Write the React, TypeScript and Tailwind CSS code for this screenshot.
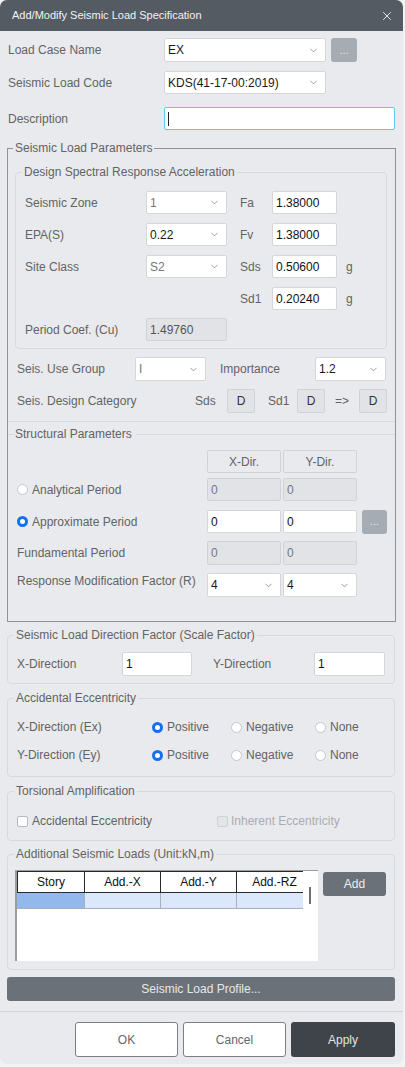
import { ChevronDown, X } from 'lucide-react';
import type { ReactNode } from 'react';

const font = { fontFamily: '"Liberation Sans", Arial, sans-serif' };

function Select({ value, className = '', dim = false }: { value: string; className?: string; dim?: boolean }) {
  return (
    <div
      className={`flex items-center justify-between bg-white border border-[#d4d6da] rounded-[2px] pl-[3px] pr-[6px] ${className}`}
    >
      <span className={dim ? 'text-[#777]' : 'text-[#1a1a1a]'}>{value}</span>
      <ChevronDown className="w-[11px] h-[11px] text-[#777]" strokeWidth={1.6} />
    </div>
  );
}

function Field({ value = '', className = '', disabled = false }: { value?: string; className?: string; disabled?: boolean }) {
  return (
    <div
      className={`flex items-center border rounded-[2px] pl-[3px] ${
        disabled ? 'bg-[#e1e3e7] border-[#d0d2d6] text-[#777]' : 'bg-white border-[#d4d6da] text-[#111]'
      } ${className}`}
    >
      {value}
    </div>
  );
}

function Dots({ className = '' }: { className?: string }) {
  return (
    <div className={`flex items-center justify-center bg-[#a6acb3] rounded-[3px] text-[#e6e8ea] text-[11px] ${className}`}>
      ...
    </div>
  );
}

function Radio({ checked = false }: { checked?: boolean }) {
  return checked ? (
    <span className="inline-block w-[11px] h-[11px] rounded-full border-[3px] border-[#1570ef] bg-white" />
  ) : (
    <span className="inline-block w-[11px] h-[11px] rounded-full border border-[#c4c6ca] bg-white" />
  );
}

function Check({ disabled = false }: { disabled?: boolean }) {
  return (
    <span
      className={`inline-block w-[11px] h-[11px] rounded-[2px] border ${
        disabled ? 'bg-[#e4e5e8] border-[#cdd0d4]' : 'bg-white border-[#b5b8bd]'
      }`}
    />
  );
}

function Group({
  title,
  children,
  className = '',
  border = 'border-[#d7d9dd] rounded-[4px]',
  legendClass = 'ml-[6px] px-[2px]',
}: {
  title: string;
  children: ReactNode;
  className?: string;
  border?: string;
  legendClass?: string;
}) {
  return (
    <fieldset className={`border ${border} ${className}`}>
      <legend className={`leading-[14px] text-[#636363] ${legendClass}`}>{title}</legend>
      {children}
    </fieldset>
  );
}

function DBox() {
  return (
    <div className="w-[28px] h-[24px] flex items-center justify-center bg-[#e1e3e7] border border-[#d0d2d6] rounded-[2px] text-[#333]">
      D
    </div>
  );
}

export default function App() {
  return (
    <div className="w-[405px] h-[1067px] bg-[#f3f3f3] text-[12px]" style={font}>
      <div className="w-[403px] h-[1064px] bg-[#e9eaee] rounded-[7px] flex flex-col overflow-hidden">
        {/* Title bar */}
        <div className="h-[31px] shrink-0 bg-[#555b63] flex items-center justify-between pl-[12px] pr-[9px] text-[#f2f3f4] text-[11px]">
          <span>Add/Modify Seismic Load Specification</span>
          <X className="w-[14px] h-[14px]" strokeWidth={1.6} />
        </div>

        <div className="px-[7px] text-[#636363]">
          {/* Header rows */}
          <div className="mt-[7px] h-[24px] flex items-center">
            <span className="w-[157px] pl-[1px]">Load Case Name</span>
            <Select value="EX" className="w-[162px] h-[24px]" />
            <Dots className="ml-[5px] w-[26px] h-[24px]" />
          </div>
          <div className="mt-[9px] h-[23px] flex items-center">
            <span className="w-[157px] pl-[1px]">Seismic Load Code</span>
            <Select value="KDS(41-17-00:2019)" className="w-[162px] h-[23px]" />
          </div>
          <div className="mt-[13px] h-[23px] flex items-center">
            <span className="w-[157px] pl-[1px]">Description</span>
            <div className="w-[231px] h-[23px] bg-white border border-[#5ec8ee] rounded-[2px] flex items-center pl-[3px]">
              <span className="w-[1px] h-[14px] bg-[#222]" />
            </div>
          </div>

          {/* Seismic Load Parameters */}
          <Group
            title="Seismic Load Parameters"
            className="mt-[11px] w-[388px]"
            border="border-[#8f9297] rounded-none"
            legendClass="ml-[5px] px-[2px]"
          >
            <Group title="Design Spectral Response Acceleration" className="mt-[10px] ml-[7px] w-[372px]">
              <div className="pt-[12px] pb-[7px] pl-[9px] flex flex-col">
                {[
                  ['Seismic Zone', '1', true, 'Fa', '1.38000', false],
                  ['EPA(S)', '0.22', false, 'Fv', '1.38000', false],
                  ['Site Class', 'S2', true, 'Sds', '0.50600', true],
                ].map(([label, sel, dim, k, v, g]) => (
                  <div key={label as string} className="h-[23px] mb-[9px] flex items-center">
                    <span className="w-[121px]">{label}</span>
                    <Select value={sel as string} dim={dim as boolean} className="w-[81px] h-[23px]" />
                    <span className="w-[45px] pl-[13px]">{k}</span>
                    <Field value={v as string} className="w-[65px] h-[23px]" />
                    {g && <span className="ml-[9px]">g</span>}
                  </div>
                ))}
                <div className="h-[23px] mb-[8px] flex items-center">
                  <span className="w-[202px]" />
                  <span className="w-[45px] pl-[13px]">Sd1</span>
                  <Field value="0.20240" className="w-[65px] h-[23px]" />
                  <span className="ml-[9px]">g</span>
                </div>
                <div className="h-[23px] flex items-center">
                  <span className="w-[121px]">Period Coef. (Cu)</span>
                  <Field value="1.49760" disabled className="w-[81px] h-[23px] !text-[#555]" />
                </div>
              </div>
            </Group>

            <div className="pl-[9px] pr-[8px]">
              <div className="mt-[8px] h-[24px] flex items-center">
                <span className="w-[118px]">Seis. Use Group</span>
                <Select value="I" dim className="w-[71px] h-[24px]" />
                <span className="ml-[14px] w-[95px]">Importance</span>
                <Select value="1.2" className="w-[71px] h-[24px]" />
              </div>
              <div className="mt-[8px] h-[24px] flex items-center">
                <span className="w-[178px]">Seis. Design Category</span>
                <span className="w-[32px]">Sds</span>
                <DBox />
                <span className="ml-[13px] w-[29px]">Sd1</span>
                <DBox />
                <span className="ml-[10px] w-[24px]">=&gt;</span>
                <DBox />
              </div>
            </div>
            <div className="mt-[8px] border-b border-[#d7d9dd]" />

            <fieldset className="mt-[5px] border-t border-[#d7d9dd]">
              <legend className="ml-[7px] pr-[4px] leading-[14px] text-[#636363]">Structural Parameters</legend>
              <div className="pl-[9px] pb-[24px]">
                <div className="mt-[9px] h-[23px] flex items-center">
                  <span className="w-[190px]" />
                  <div className="w-[74px] h-[23px] flex items-center justify-center border border-[#cfd2d6] rounded-[2px]">X-Dir.</div>
                  <div className="ml-[2px] w-[74px] h-[23px] flex items-center justify-center border border-[#cfd2d6] rounded-[2px]">Y-Dir.</div>
                </div>
                <div className="mt-[5px] h-[23px] flex items-center">
                  <span className="w-[190px] flex items-center gap-[4px]">
                    <Radio />
                    Analytical Period
                  </span>
                  <Field value="0" disabled className="w-[74px] h-[23px]" />
                  <Field value="0" disabled className="ml-[2px] w-[74px] h-[23px]" />
                </div>
                <div className="mt-[9px] h-[23px] flex items-center">
                  <span className="w-[190px] flex items-center gap-[4px]">
                    <Radio checked />
                    Approximate Period
                  </span>
                  <Field value="0" className="w-[74px] h-[23px]" />
                  <Field value="0" className="ml-[2px] w-[74px] h-[23px]" />
                  <Dots className="ml-[5px] w-[25px] h-[24px]" />
                </div>
                <div className="mt-[8px] h-[24px] flex items-center">
                  <span className="w-[190px]">Fundamental Period</span>
                  <Field value="0" disabled className="w-[74px] h-[24px]" />
                  <Field value="0" disabled className="ml-[2px] w-[74px] h-[24px]" />
                </div>
                <div className="mt-[8px] h-[24px] flex items-center">
                  <span className="w-[190px] -mt-[8px]">Response Modification Factor (R)</span>
                  <Select value="4" className="w-[74px] h-[24px]" />
                  <Select value="4" className="ml-[2px] w-[74px] h-[24px]" />
                </div>
              </div>
            </fieldset>
          </Group>

          {/* Scale factor */}
          <Group title="Seismic Load Direction Factor (Scale Factor)" className="mt-[6px] w-[388px]">
            <div className="mt-[10px] mb-[7px] pl-[9px] h-[24px] flex items-center">
              <span className="w-[105px]">X-Direction</span>
              <Field value="1" className="w-[70px] h-[24px]" />
              <span className="ml-[21px] w-[101px]">Y-Direction</span>
              <Field value="1" className="w-[71px] h-[24px]" />
            </div>
          </Group>

          {/* Accidental Eccentricity */}
          <Group title="Accidental Eccentricity" className="mt-[7px] w-[388px]">
            <div className="mt-[12px] mb-[11px] pl-[9px] flex flex-col gap-[8px]">
              {['X-Direction (Ex)', 'Y-Direction (Ey)'].map((l) => (
                <div key={l} className="h-[20px] flex items-center">
                  <span className="w-[135px]">{l}</span>
                  <span className="w-[79px] flex items-center gap-[4px]">
                    <Radio checked />
                    Positive
                  </span>
                  <span className="w-[84px] flex items-center gap-[4px]">
                    <Radio />
                    Negative
                  </span>
                  <span className="flex items-center gap-[4px]">
                    <Radio />
                    None
                  </span>
                </div>
              ))}
            </div>
          </Group>

          {/* Torsional Amplification */}
          <Group title="Torsional Amplification" className="mt-[7px] w-[388px]">
            <div className="mt-[13px] mb-[9px] pl-[9px] h-[20px] flex items-center">
              <span className="w-[200px] flex items-center gap-[4px]">
                <Check />
                Accidental Eccentricity
              </span>
              <span className="flex items-center gap-[3px] text-[#a9acb0]">
                <Check disabled />
                Inherent Eccentricity
              </span>
            </div>
          </Group>

          {/* Additional Seismic Loads */}
          <Group title="Additional Seismic Loads (Unit:kN,m)" className="mt-[6px] w-[388px]">
            <div className="mt-[9px] mb-[8px] ml-[7px] flex items-start">
              <div className="relative w-[303px] h-[91px] bg-white border-l-2 border-t border-[#9a9c9f] overflow-hidden">
                <div className="w-[286px] overflow-hidden">
                  <div className="grid grid-cols-[68px_76px_76px_76px] w-[296px] text-[#111]">
                    {['Story', 'Add.-X', 'Add.-Y', 'Add.-RZ'].map((h) => (
                      <div key={h} className="h-[22px] flex items-center justify-center border border-[#2a2a2a] -ml-[1px] first:ml-0">
                        {h}
                      </div>
                    ))}
                    <div className="h-[16px] bg-[#93b9ec] border-b border-r border-[#a9b1bd]" />
                    <div className="h-[16px] bg-[#dbe8fb] border-b border-r border-[#a9b1bd]" />
                    <div className="h-[16px] bg-[#dbe8fb] border-b border-r border-[#a9b1bd]" />
                    <div className="h-[16px] bg-[#dbe8fb] border-b border-[#a9b1bd]" />
                  </div>
                </div>
                <div className="absolute right-[7px] top-[16px] w-[2px] h-[17px] bg-[#6b6e72]" />
              </div>
              <div className="ml-[5px] mt-[2px] w-[63px] h-[24px] flex items-center justify-center bg-[#6b7178] rounded-[3px] text-[#eceef0]">
                Add
              </div>
            </div>
          </Group>

          <div className="mt-[7px] h-[24px] w-[388px] flex items-center justify-center bg-[#6b7178] rounded-[3px] text-[#e6e8ea]">
            Seismic Load Profile...
          </div>
        </div>

        <div className="mt-[10px] border-t border-[#d2d4d8]" />

        <div className="mt-[10px] pl-[75px] flex gap-[5px]">
          <div className="w-[103px] h-[35px] flex items-center justify-center bg-white border border-[#7c7f84] rounded-[3px] text-[#666]">
            OK
          </div>
          <div className="w-[103px] h-[35px] flex items-center justify-center bg-white border border-[#7c7f84] rounded-[3px] text-[#666]">
            Cancel
          </div>
          <div className="w-[104px] h-[35px] flex items-center justify-center bg-[#3f444b] rounded-[3px] text-[#e2e4e6]">
            Apply
          </div>
        </div>
      </div>
    </div>
  );
}
